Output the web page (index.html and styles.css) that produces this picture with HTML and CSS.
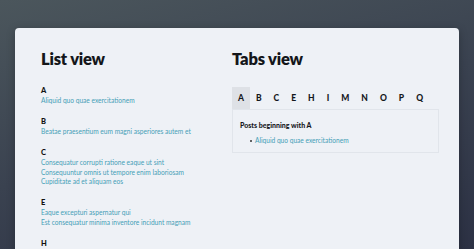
FILE: index.html
```html
<!DOCTYPE html>
<html>
<head>
<meta charset="utf-8">
<link rel="stylesheet" href="styles.css">
</head>
<body>
<div class="page">
  <div class="card">
    <section class="col list-col">
      <h2 class="title">List view</h2>
      <div class="group">
        <h3 class="letter">A</h3>
        <a class="link">Aliquid quo quae exercitationem</a>
      </div>
      <div class="group">
        <h3 class="letter">B</h3>
        <a class="link">Beatae praesentium eum magni asperiores autem et</a>
      </div>
      <div class="group">
        <h3 class="letter">C</h3>
        <a class="link">Consequatur corrupti ratione eaque ut sint</a>
        <a class="link">Consequuntur omnis ut tempore enim laboriosam</a>
        <a class="link">Cupiditate ad et aliquam eos</a>
      </div>
      <div class="group">
        <h3 class="letter">E</h3>
        <a class="link">Eaque excepturi aspernatur qui</a>
        <a class="link">Est consequatur minima inventore incidunt magnam</a>
      </div>
      <div class="group">
        <h3 class="letter">H</h3>
        <a class="link">Hic quod illo</a>
      </div>
    </section>
    <section class="col tabs-col">
      <h2 class="title">Tabs view</h2>
      <div class="tabs">
        <span class="tab active">A</span>
        <span class="tab">B</span>
        <span class="tab">C</span>
        <span class="tab">E</span>
        <span class="tab">H</span>
        <span class="tab">I</span>
        <span class="tab">M</span>
        <span class="tab">N</span>
        <span class="tab">O</span>
        <span class="tab">P</span>
        <span class="tab">Q</span>
      </div>
      <div class="panel">
        <h4 class="panel-title">Posts beginning with A</h4>
        <ul class="panel-list">
          <li class="panel-item"><a class="link">Aliquid quo quae exercitationem</a></li>
        </ul>
      </div>
    </section>
  </div>
</div>
</body>
</html>
```

FILE: styles.css
```css
* { box-sizing: border-box; }
html, body { margin: 0; height: 100%; }
body {
  font-family: Lato, "Noto Sans", sans-serif;
  background: linear-gradient(165deg, #4b565c 0%, #3a4250 50%, #2c3144 100%);
  overflow: hidden;
}
.page {
  padding: 28px 15px 0;
}
.card {
  background: #eef1f6;
  border-radius: 4px;
  height: 240px;
  padding: 21px 20px 0 26px;
  display: grid;
  grid-template-columns: 191px 207px;
  box-shadow: 0 2px 8px rgba(0,0,0,0.25);
}
.title {
  margin: 0;
  font-size: 16.5px;
  line-height: 20px;
  font-weight: 800;
  color: #14161a;
  letter-spacing: -0.2px;
}
.list-col .title { margin-bottom: 17px; }
.group {
  display: flex;
  flex-direction: column;
  margin-bottom: 11.5px;
}
.letter {
  margin: 0;
  font-size: 7.5px;
  line-height: 9.8px;
  font-weight: 900;
  color: #111;
}
.link {
  font-size: 6.6px;
  line-height: 9.7px;
  color: #45a0b6;
  white-space: nowrap;
}
.tabs-col .title { margin-bottom: 18px; }
.tabs {
  display: flex;
  height: 22px;
}
.tab {
  display: flex;
  align-items: center;
  padding: 0 6px;
  font-size: 8.5px;
  font-weight: 900;
  color: #15171b;
}
.tab.active {
  background: #dee1e6;
}
.panel {
  border: 1px solid #e1e5eb;
  padding: 11px 7px 8px;
  height: 44px;
}
.panel-title {
  margin: 0;
  font-size: 7px;
  line-height: 9px;
  font-weight: 900;
  color: #15171b;
}
.panel-list {
  list-style: none;
  margin: 6px 0 0;
  padding-left: 10px;
}
.panel-item {
  display: flex;
  align-items: center;
  gap: 3px;
}
.panel-item::before {
  content: "";
  width: 2px;
  height: 2px;
  border-radius: 50%;
  background: #333;
}
```
